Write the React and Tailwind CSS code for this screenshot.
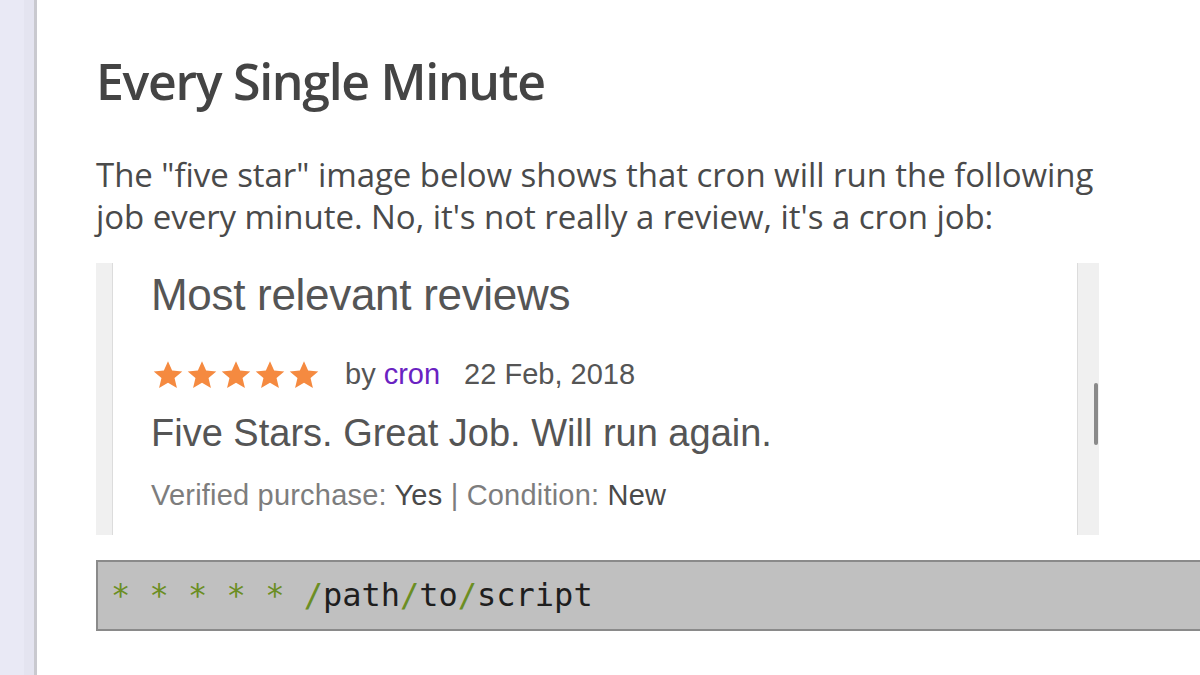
import React from "react";

function Star() {
  return (
    <svg viewBox="0 0 24 24" className="w-[34px] h-[32px]" fill="#f58a40">
      <path d="M12 1.6l3.1 7.1 7.6.6-5.8 5 1.8 7.5L12 17.8l-6.7 4 1.8-7.5-5.8-5 7.6-.6z" />
    </svg>
  );
}

function ReviewShot() {
  return (
    <div className="flex w-[1003px] h-[272px] bg-white">
      <div className="w-[17px] bg-[#f0f0f0] border-r border-[#dcdcdc]" />
      <div
        className="flex-1 pl-[38px] pt-[6px] text-[#555]"
        style={{ fontFamily: '"Liberation Sans", Arial, sans-serif' }}
      >
        <div className="text-[44px] leading-[52px] tracking-[-0.3px]">Most relevant reviews</div>
        <div className="flex items-center mt-[37px] h-[34px]">
          <div className="flex">
            <Star />
            <Star />
            <Star />
            <Star />
            <Star />
          </div>
          <span className="ml-[24px] text-[29px] text-[#555]">
            by <span className="text-[#6a22c2]">cron</span>
          </span>
          <span className="ml-[24px] text-[29px] text-[#555]">22 Feb, 2018</span>
        </div>
        <div className="text-[38px] leading-[46px] mt-[18px] text-[#555]">
          Five Stars. Great Job. Will run again.
        </div>
        <div className="text-[29px] leading-[34px] mt-[22px] text-[#7d7d7d] tracking-[0.2px]">
          Verified purchase: <span className="text-[#4a4a4a]">Yes</span> | Condition:{" "}
          <span className="text-[#4a4a4a]">New</span>
        </div>
      </div>
      <div className="relative w-[22px] bg-[#f0f0f0] border-l border-[#dcdcdc]">
        <div className="absolute right-[1px] top-[120px] w-[4px] h-[62px] rounded-full bg-[#8a8a8a]" />
      </div>
    </div>
  );
}

export default function App() {
  return (
    <div className="flex w-[1200px] h-[675px] overflow-hidden bg-white">
      <div className="flex shrink-0">
        <div className="w-[24px] bg-[#e9e9f5]" />
        <div className="w-[10px] bg-[#e4e4f0]" />
        <div className="w-[3px] bg-[#c9c9cf]" />
      </div>
      <div className="flex-1 pl-[59px] pt-[48px] min-w-0">
        <h2
          className="text-[50px] leading-[66px] font-semibold text-[#444] tracking-[-1.3px]"
          style={{ fontFamily: '"Open Sans", "Noto Sans", sans-serif' }}
        >
          Every Single Minute
        </h2>
        <p
          className="mt-[40px] w-[1100px] text-[33px] leading-[42px] text-[#4a4a4a] tracking-[-0.05px]"
          style={{ fontFamily: '"Open Sans", "Noto Sans", sans-serif' }}
        >
          The "five star" image below shows that cron will run the following
          <br />
          job every minute. No, it's not really a review, it's a cron job:
        </p>
        <div className="mt-[25px]">
          <ReviewShot />
        </div>
        <pre
          className="mt-[25px] w-[1130px] h-[71px] bg-[#c0c0c0] border-2 border-[#8a8a8a] pl-[13px] pt-[14px] text-[32px] leading-[38px] text-[#1e1e1e]"
          style={{ fontFamily: '"DejaVu Sans Mono", monospace' }}
        >
          <span className="text-[#6b8e23]">* * * * * /</span>path
          <span className="text-[#6b8e23]">/</span>to
          <span className="text-[#6b8e23]">/</span>script
        </pre>
      </div>
    </div>
  );
}
